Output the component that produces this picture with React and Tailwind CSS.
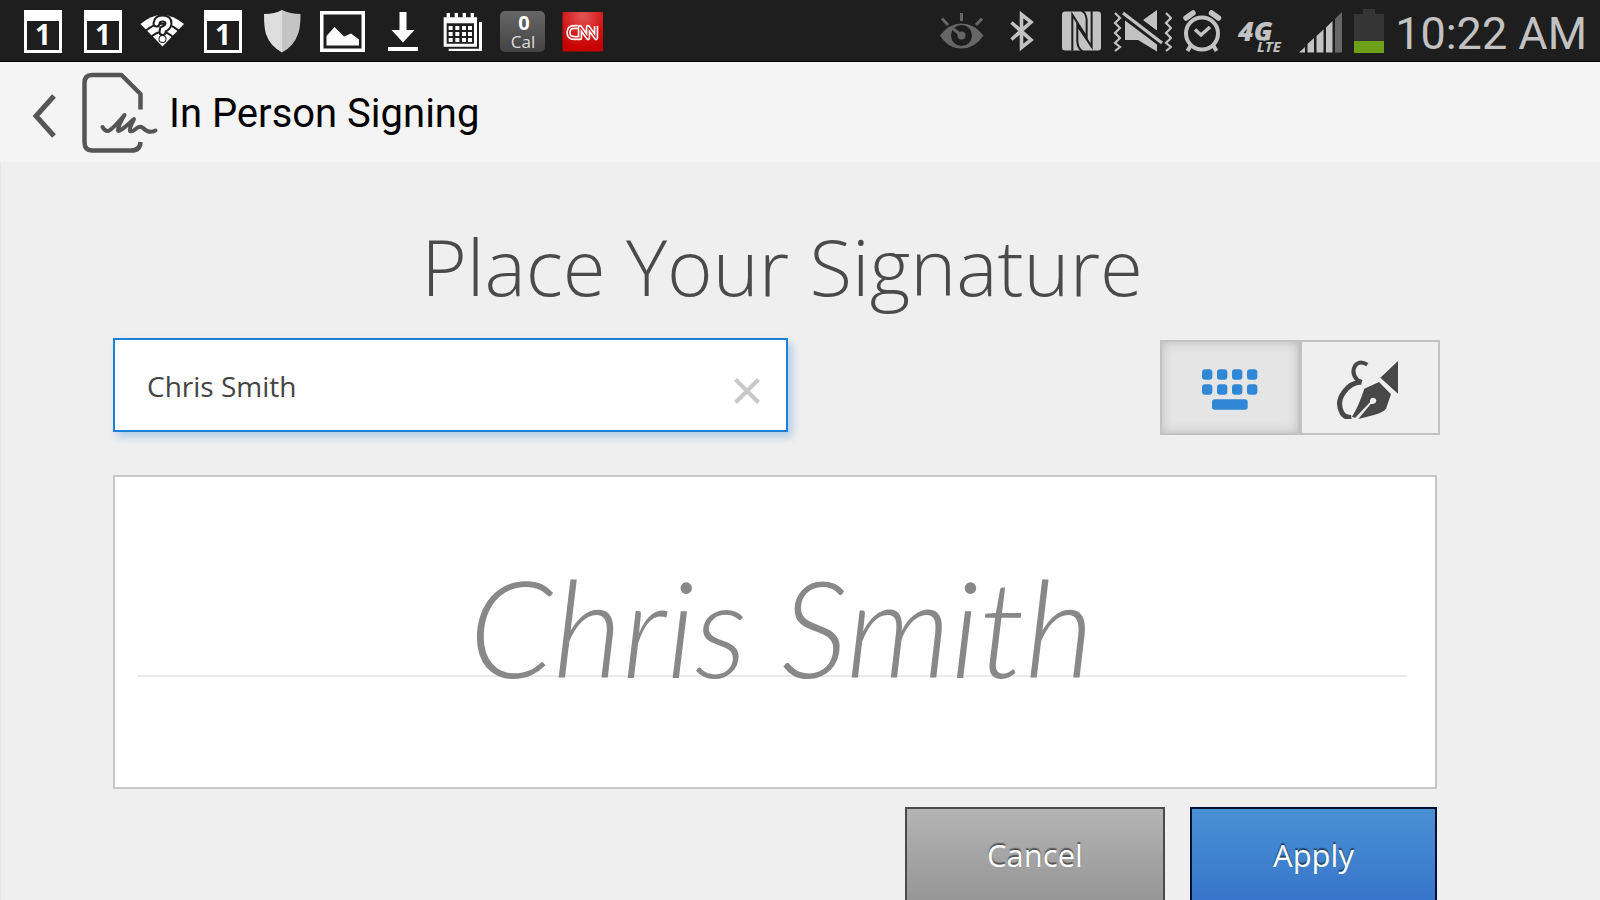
import { useState } from "react";

function StatusIcon({ x, w = 60, label, children }) {
  return (
    <svg role="img" aria-label={label} width={w} height="62" viewBox={`${x} 0 ${w} 62`} className="shrink-0">
      {children}
    </svg>
  );
}

function DayIcon({ x }) {
  return (
    <StatusIcon x={x} label="Calendar day">
      <path fill="#fff" fillRule="evenodd" d={`M${x + 11} 10h38v43h-38zM${x + 14} 21v29h32v-29z`} />
      <text x={x + 30} y="45" textAnchor="middle" fontSize="28" fontWeight="700" fill="#fff" className="font-['Open_Sans',sans-serif]">1</text>
    </StatusIcon>
  );
}

const GRID_X = [416, 436, 456, 474];
const GRID_Y = [78, 96, 114];

function LeftStatus() {
  return (
    <div className="flex">
      <DayIcon x={13} />
      <DayIcon x={73} />
      <StatusIcon x={133} label="Unknown Wi-Fi">
        <path fill="#fff" d="M140.500 24Q162 6 184 24L162.500 46.500Z" />
        <path fill="none" stroke="#1e1e1e" strokeWidth="2" d="M146 30.500Q162 17 178.500 30.500M151 37Q162 27 173 37" />
        <g fill="none" strokeLinecap="round">
          <path stroke="#1e1e1e" strokeWidth="8" d="M156.500 23.500Q157 18.500 162.500 18.500Q168.500 18.500 168.500 23.500Q168.500 27 163 29.500L162.500 32M162.500 39v.1" />
          <path stroke="#fff" strokeWidth="4" d="M156.500 23.500Q157 18.500 162.500 18.500Q168.500 18.500 168.500 23.500Q168.500 27 163 29.500L162.500 32" />
          <path stroke="#fff" strokeWidth="6" d="M162.500 39v.1" />
        </g>
      </StatusIcon>
      <DayIcon x={193} />
      <StatusIcon x={253} label="Shield">
        <path fill="#dedede" d="M282 10Q275 14 264 14Q264 28 266 34Q270 46 282 52.500Z" />
        <path fill="#c4c4c4" d="M282 10Q290 14 300.500 14Q300.500 28 298 34Q294 46 282 52.500Z" />
      </StatusIcon>
      <StatusIcon x={313} label="Picture">
        <path fill="#fff" fillRule="evenodd" d="M320 11h45v41h-45zM323.500 14.500v34h38v-34z" />
        <path fill="#fff" d="M326.500 45.500V36l8-9 9.500 9.500 7-3 8 6v6z" />
      </StatusIcon>
      <StatusIcon x={373} label="Download">
        <path fill="#fff" d="M399.500 12h7v18h8L403 42.500 391.500 30h8zM388 47h30v4h-30z" />
      </StatusIcon>
      <StatusIcon x={433} label="Calendar">
        <g transform="translate(310 0) scale(.3333)" fill="#fff">
          <path fillRule="evenodd" d="M401 52h100v88H401zM410 70v61h82V70z" />
          <path d="M410 39h10v14h-10zM434 39h10v14h-10zM458 39h10v14h-10zM482 39h10v14h-10zM507 66h9v87H416v-7h91z" />
          {GRID_X.flatMap((gx) => GRID_Y.map((gy) => <rect key={`${gx}-${gy}`} x={gx} y={gy} width="12" height="12" />))}
        </g>
      </StatusIcon>
      <StatusIcon x={493} label="Calories">
        <defs>
          <linearGradient id="cal" x1="0" y1="0" x2="0" y2="1">
            <stop offset="0" stopColor="#666" />
            <stop offset="1" stopColor="#444" />
          </linearGradient>
        </defs>
        <rect x="500" y="11" width="45" height="41" rx="5" fill="url(#cal)" />
        <text x="524" y="30" textAnchor="middle" fontSize="20" fontWeight="700" fill="#fff" className="font-['Open_Sans',sans-serif]">0</text>
        <text x="523" y="48" textAnchor="middle" fontSize="17" fill="#ddd" className="font-['Open_Sans',sans-serif]">Cal</text>
      </StatusIcon>
      <StatusIcon x={553} label="CNN">
        <defs>
          <radialGradient id="news" cx=".5" cy=".1" r=".9">
            <stop offset="0" stopColor="#e25555" />
            <stop offset=".6" stopColor="#d21414" />
            <stop offset="1" stopColor="#c40000" />
          </radialGradient>
        </defs>
        <rect x="562.500" y="12" width="40.500" height="39.500" rx="1" fill="url(#news)" />
        <g fill="none" strokeLinejoin="round">
          <path stroke="#fff" strokeWidth="4.500" d="M578 27h-3.500Q568.500 27 568.500 32.500T574.500 38H580V27L588 38V27L596 38V26" />
          <path stroke="#cf1616" strokeWidth="1.200" d="M578 27h-3.500Q568.500 27 568.500 32.500T574.500 38H580V27L588 38V27L596 38V26" />
        </g>
      </StatusIcon>
    </div>
  );
}

function RightStatus() {
  return (
    <div className="flex">
      <StatusIcon x={932} label="Smart stay">
        <path fill="none" stroke="#666" strokeWidth="3" d="M961.500 13v8M942 18.500l6 6.500M982 18.500l-6 6.500" />
        <path fill="#666" d="M940 35.500Q949 23.500 961.500 23.500T983.500 35.500Q975 48.500 961.500 48.500T940 35.500Z" />
        <circle cx="961.500" cy="35.500" r="10.500" fill="#1e1e1e" />
        <circle cx="961.500" cy="35.500" r="4" fill="#666" />
        <path fill="none" stroke="#666" strokeWidth="3" d="M953.500 29l6 5" />
      </StatusIcon>
      <StatusIcon x={992} label="Bluetooth">
        <path fill="none" stroke="#c2c2c2" strokeWidth="3.600" d="M1011.500 22.500L1031 40 1021.500 47.500V14.500L1031 22 1011.500 39.500" />
      </StatusIcon>
      <StatusIcon x={1052} label="NFC">
        <rect x="1062" y="11.500" width="39" height="39" rx="3" fill="#c2c2c2" />
        <g transform="translate(920 0) scale(.3333)" fill="none" stroke="#1e1e1e" strokeWidth="6">
          <path d="M457 152V44L500 112V60Q499 38 484 32" />
          <path d="M515 32V140L472 76V124Q473 146 488 154" />
        </g>
      </StatusIcon>
      <StatusIcon x={1112} label="Vibrate">
        <g fill="none" stroke="#c2c2c2" strokeWidth="2.200">
          <path d="M1115 13l5 5-5 5 5 5-5 5 5 5-5 5 5 4-5 4M1166 13l5 5-5 5 5 5-5 5 5 5-5 5 5 4-5 4" />
          <path strokeWidth="3.200" d="M1123 13l39 30" />
        </g>
        <path fill="#c2c2c2" d="M1157 10v20.500l-14-10.500zM1125 20.500v19.500h13l19 11.500v-7z" />
      </StatusIcon>
      <StatusIcon x={1172} label="Alarm">
        <g fill="none" stroke="#c2c2c2">
          <circle cx="1202" cy="33.500" r="16" strokeWidth="4" />
          <path strokeWidth="5.500" strokeLinecap="round" d="M1186 18l7-5M1218.500 18l-7-5" />
          <path strokeWidth="4" d="M1191 45l-3.500 6M1213 45l3.500 6" />
          <path strokeWidth="3.500" d="M1195 29.500l6 5.500 9-8" />
        </g>
      </StatusIcon>
      <StatusIcon x={1231} label="4G LTE">
        <text x="1237" y="41" fontSize="27" fontWeight="800" fontStyle="italic" fill="#c2c2c2" className="font-['Open_Sans',sans-serif]">4G</text>
        <text x="1256" y="52" fontSize="15" fontWeight="700" fontStyle="italic" fill="#c2c2c2" stroke="#1e1e1e" strokeWidth="3" paintOrder="stroke" className="font-['Open_Sans',sans-serif]">LTE</text>
      </StatusIcon>
      <StatusIcon x={1292} label="Signal strength">
        <path fill="#c2c2c2" d="M1299 52.500l6-5.500v5.500zM1307.500 52.500V44l6.500-6v14.500zM1316.500 52.500V36l7-6.500v23zM1326 52.500V27.500l6.500-6.500v31.500z" />
        <path fill="#666" d="M1335 52.500V19l7-7v40.500z" />
      </StatusIcon>
      <StatusIcon x={1352} w={43} label="Battery">
        <path fill="#353535" d="M1363 9h12v5h9v27h-30V14h9z" />
        <path fill="#6ea01a" d="M1354 41h30v12h-30z" />
      </StatusIcon>
      <time className="font-[Roboto,sans-serif] text-[45px] leading-[68px] whitespace-nowrap text-[#c2c2c2]">10:22 AM</time>
    </div>
  );
}

function DocumentLogo() {
  return (
    <svg width="78" height="84" viewBox="81 72 78 84" aria-hidden="true" className="shrink-0">
      <g fill="none" stroke="#555" strokeLinejoin="round">
        <path strokeWidth="4.500" d="M140.500 109.500V94L121.500 75H92Q84.500 75 84.500 83V142Q84.500 150.500 92 150.500H131Q140 150.500 140.500 142" />
        <path strokeWidth="4" strokeLinecap="round" d="M102.500 127Q105 131.500 108 131Q112 130 124.500 115Q118 126 118 130.500Q119 133 134 119Q129 129 130 131Q132 132 135 129.500Q140 125 143 128Q149 134 155.500 130.500" />
      </g>
    </svg>
  );
}

function KeyboardIcon() {
  return (
    <svg width="56" height="41" viewBox="187 149 168 123" fill="#2f87d6" aria-hidden="true">
      {[187, 232, 277, 322].flatMap((x) => [150, 195].map((y) => <rect key={`${x}-${y}`} x={x} y={y} width="31" height="31" rx="9" />))}
      <rect x="217" y="240" width="107" height="31" rx="8" />
    </svg>
  );
}

function PenIcon() {
  return (
    <svg width="63" height="59" viewBox="588 124 189 177" aria-hidden="true">
      <path fill="#484848" d="M774 127V225L721 177ZM717 190L753 227 738 270Q728 282 702 289L655 301 692 256Q708 258 709 245 707 235 694 238 688 244 690 251L645 298 636 294Q655 265 673 210Z" />
      <path fill="none" stroke="#484848" strokeWidth="12" d="M682 138Q660 124 646 140 632 162 652 184L665 190" />
      <path fill="none" stroke="#484848" strokeWidth="15" d="M664 190Q632 192 612 220 588 252 607 285 616 298 634 296" />
    </svg>
  );
}

export default function App() {
  const [name, setName] = useState("Chris Smith");
  const [mode, setMode] = useState("type");
  const toggle = "flex w-1/2 items-center justify-center border-2 border-[#c2c2c2]";
  const pressed = "bg-[#e5e5e5] shadow-[inset_0_0_12px_rgba(0,0,0,0.18)]";

  return (
    <div className="flex h-screen flex-col overflow-hidden bg-[#efefef] font-['Open_Sans',sans-serif]">
      <div className="flex h-[62px] shrink-0 justify-between border-b border-black bg-[#1e1e1e] pr-[13px] pl-[13px]">
        <LeftStatus />
        <RightStatus />
      </div>

      <header className="flex h-[100px] shrink-0 items-center bg-[#f4f4f4] pt-[4px] pl-[32px]">
        <button type="button" aria-label="Back" className="mr-[25px] pt-[4px]">
          <svg width="24" height="44" viewBox="0 0 24 44" aria-hidden="true">
            <path fill="none" stroke="#555" strokeWidth="5" d="M22 2L4 22L22 42" />
          </svg>
        </button>
        <DocumentLogo />
        <h1 className="ml-[10px] font-[Roboto,sans-serif] text-[40px] leading-[48px] text-black">In Person Signing</h1>
      </header>

      <main className="flex-1 border-l border-[#e6e6e6] pt-[50px] pr-[163px] pl-[112px]">
        <h2 className="pl-[14px] text-center text-[78px] leading-[108px] font-light whitespace-nowrap text-[#4a4a4a]">Place Your Signature</h2>

        <div className="mt-[18px] -mr-[3px] flex h-[97px] justify-between">
          <div className="flex h-[94px] w-[675px] items-center self-start border-2 border-[#1c80d6] bg-white pr-[26px] pl-[32px] shadow-[4px_5px_8px_rgba(28,128,214,0.3)]">
            <input
              aria-label="Signer name"
              value={name}
              onChange={(e) => setName(e.target.value)}
              className="min-w-0 flex-1 bg-transparent pt-[2px] text-[28px] leading-[40px] text-[#444] outline-none"
            />
            <button type="button" aria-label="Clear name" onClick={() => setName("")} className="pt-[12px]">
              <svg width="26" height="26" viewBox="0 0 26 26" aria-hidden="true">
                <path stroke="#c8c8c8" strokeWidth="4" d="M1.500 1.500l23 23M24.500 1.500l-23 23" />
              </svg>
            </button>
          </div>

          <div className="flex h-[95px] w-[280px] self-end">
            <button type="button" aria-label="Type signature" aria-pressed={mode === "type"} onClick={() => setMode("type")} className={`${toggle} pt-[4px] ${mode === "type" ? pressed : ""}`}>
              <KeyboardIcon />
            </button>
            <button type="button" aria-label="Draw signature" aria-pressed={mode === "draw"} onClick={() => setMode("draw")} className={`${toggle} pt-[4px] pr-[6px] ${mode === "draw" ? pressed : ""}`}>
              <PenIcon />
            </button>
          </div>
        </div>

        <section aria-label="Signature preview" className="mt-[40px] h-[314px] border-2 border-[#c8c8c8] bg-white pr-[28px] pl-[23px]">
          <p className="flex h-[200px] items-end justify-center border-b-2 border-[#ebebeb] pl-[18px] font-[Lato,sans-serif] text-[134px] leading-[96px] font-light whitespace-nowrap text-[#888] italic">
            {name}
          </p>
        </section>

        <div className="mt-[18px] flex justify-end gap-[25px]">
          <button type="button" className="h-[108px] w-[260px] border-2 border-[#4a4a4a] bg-linear-to-b from-[#b4b4b4] to-[#929292] pb-[12px] text-[31px] leading-[44px] text-white text-shadow-[0_-2px_1px_rgba(0,0,0,0.5)]">
            Cancel
          </button>
          <button type="button" className="h-[108px] w-[247px] border-2 border-[#000f33] bg-linear-to-b from-[#4a90d4] to-[#3472c8] pb-[12px] text-[31px] leading-[44px] text-white text-shadow-[0_-2px_1px_rgba(0,0,0,0.5)]">
            Apply
          </button>
        </div>
      </main>
    </div>
  );
}
